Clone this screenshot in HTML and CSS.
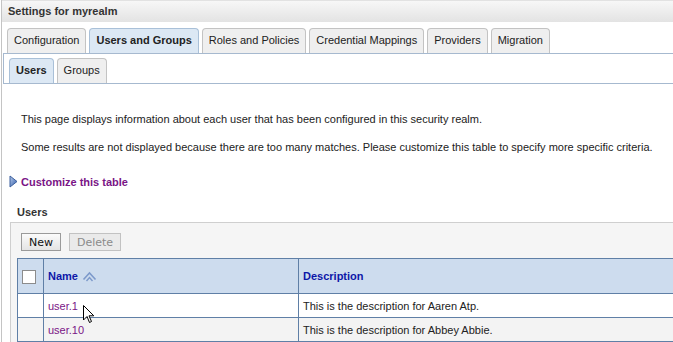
FILE: index.html
```html
<!DOCTYPE html>
<html>
<head>
  <title>Settings for myrealm</title>
  <link rel="stylesheet" href="styles.css">
</head>
<body>

<div class="page">
  <div class="titlebar">Settings for myrealm</div>

  <div class="tabs">
    <span class="tab">Configuration</span>
    <span class="tab active">Users and Groups</span>
    <span class="tab">Roles and Policies</span>
    <span class="tab">Credential Mappings</span>
    <span class="tab">Providers</span>
    <span class="tab">Migration</span>
  </div>

  <div class="subtabs">
    <span class="tab active">Users</span>
    <span class="tab">Groups</span>
  </div>

  <div class="content">
    <p class="intro">This page displays information about each user that has been configured in this security realm.</p>
    <p class="intro">Some results are not displayed because there are too many matches. Please customize this table to specify more specific criteria.</p>

    <a href="#" class="customize">
      <svg width="9" height="13" viewBox="0 0 9 13">
        <defs>
          <linearGradient id="tri" x1="0" y1="0" x2="1" y2="1">
            <stop offset="0" stop-color="#b9cdec"/>
            <stop offset="1" stop-color="#2f5aa8"/>
          </linearGradient>
        </defs>
        <path d="M1 1 L8 6.5 L1 12 Z" fill="url(#tri)" stroke="#3b5f9e" stroke-width="1"/>
      </svg>
      Customize this table
    </a>

    <h4 class="section">Users</h4>

    <div class="panel">
      <div class="toolbar">
        <button type="button" class="btn">New</button>
        <button type="button" class="btn" disabled>Delete</button>
      </div>

      <table class="grid">
        <tr>
          <th class="check"><span class="box"></span></th>
          <th class="name">Name
            <svg class="sort" width="15" height="11" viewBox="0 0 15 11">
              <path d="M1.5 8.5 L7.5 2 L13.5 8.5" fill="none" stroke="#7d9acb" stroke-width="1.6"/>
              <path d="M4.5 10 L7.5 6.5 L10.5 10" fill="none" stroke="#7d9acb" stroke-width="1.4"/>
            </svg>
          </th>
          <th>Description</th>
        </tr>
        <tr>
          <td></td>
          <td><a href="#">user.1</a></td>
          <td>This is the description for Aaren Atp.</td>
        </tr>
        <tr class="alt">
          <td></td>
          <td><a href="#">user.10</a></td>
          <td>This is the description for Abbey Abbie.</td>
        </tr>
      </table>
    </div>
  </div>
</div>

<svg class="cursor" width="12" height="19" viewBox="0 0 12 19">
  <path d="M0.5 0.5 L0.5 15 L4 11.5 L6.5 17.5 L8.5 16.5 L6 10.8 L10.8 10.8 Z" fill="#fff" stroke="#000" stroke-width="1"/>
</svg>

</body>
</html>
```

FILE: styles.css
```css
body {
  margin: 0;
  font-family: "Liberation Sans", Arial, sans-serif;
  font-size: 11px;
  color: #222;
  background: #fff;
  overflow: hidden;
  position: relative;
}

.page {
  margin-left: 1px;
  border-left: 1px solid #c4c4c4;
  min-height: 342px;
}

.titlebar {
  height: 21px;
  line-height: 21px;
  padding-left: 6px;
  border-top: 1px solid #e2e2e2;
  background: linear-gradient(#f7f7f7, #e3e3e3);
  font-weight: bold;
  color: #333;
}

.tabs {
  display: flex;
  gap: 3px;
  padding: 6px 0 0 4px;
  margin-left: 1px;
  border-bottom: 1px solid #a6b9cf;
}

.tab {
  height: 24px;
  line-height: 23px;
  padding: 0 6px;
  border: 1px solid #c3c3c3;
  border-bottom: none;
  border-radius: 4px 4px 0 0;
  background: #efefef;
  color: #222;
}

.tab.active {
  background: #dce8f4;
  border-color: #a9c0d8;
  font-weight: bold;
}

.subtabs {
  display: flex;
  gap: 3px;
  margin-left: 1px;
  padding: 4px 0 0 5px;
  border-left: 1px solid #a6b9cf;
  border-bottom: 1px solid #a6b9cf;
}

.content {
  padding-top: 29px;
}

.intro {
  margin: 0 0 15px 19px;
  line-height: 13px;
}

.customize {
  display: flex;
  align-items: center;
  gap: 3px;
  margin: 21px 0 0 7px;
  font-weight: bold;
  color: #7a1486;
  text-decoration: none;
}

.section {
  margin: 18px 0 0 15px;
  font-size: 11px;
  color: #333;
}

.panel {
  margin: 4px 0 0 8px;
  width: 720px;
  padding: 10px 0 0 6px;
  border: 1px solid #cfcfcf;
  background: #f5f5f5;
}

.toolbar {
  display: flex;
  gap: 8px;
  padding-left: 4px;
  margin-bottom: 7px;
}

.btn {
  height: 18px;
  padding: 0 7px;
  font-family: "DejaVu Sans", sans-serif;
  font-size: 11px;
  color: #111;
  background: linear-gradient(#fbfbfb, #e4e4e4);
  border: 1px solid #9a9a9a;
  border-radius: 0;
}

.btn:disabled {
  color: #8a8a8a;
  background: #eaeaea;
  border-color: #c2c2c2;
}

.grid {
  border-collapse: collapse;
  width: 720px;
  background: #fff;
}

.grid th,
.grid td {
  border: 1px solid #5f7fa6;
  text-align: left;
  padding: 0 4px;
}

.grid th {
  height: 34px;
  background: #cddcee;
  color: #0d17a8;
  font-weight: bold;
}

.grid td {
  height: 23px;
}

.grid .alt td {
  background: #f3f3f3;
}

.grid th.check {
  width: 17px;
  padding: 0 4px;
}

.grid th.name {
  width: 246px;
}

.box {
  display: block;
  width: 12px;
  height: 12px;
  border: 1px solid #8c8c8c;
  background: #fff;
  margin-top: 2px;
}

.sort {
  vertical-align: middle;
  margin-left: 1px;
}

.grid a {
  color: #7a1486;
  text-decoration: none;
}

.cursor {
  position: absolute;
  left: 83px;
  top: 305px;
}
```
